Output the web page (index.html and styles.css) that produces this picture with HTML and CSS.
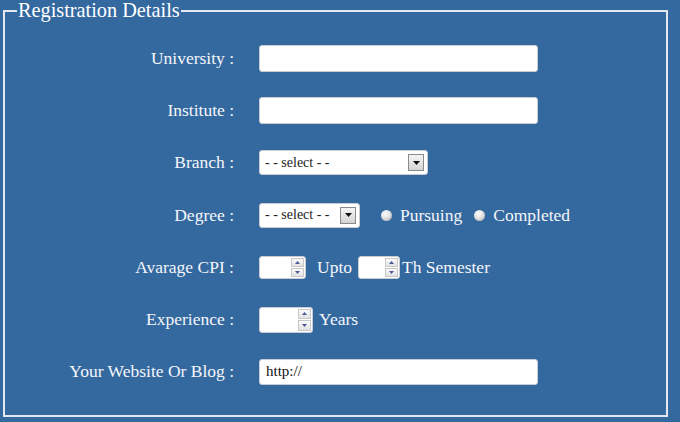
FILE: index.html
```
<!DOCTYPE html>
<html>
<head>
<meta charset="utf-8">
<link rel="stylesheet" href="styles.css">
</head>
<body>
<fieldset class="panel">
  <legend class="title">Registration Details</legend>
  <div class="form">
    <label class="lbl">University :</label>
    <div class="ctl"><input class="txt" type="text"></div>

    <label class="lbl">Institute :</label>
    <div class="ctl"><input class="txt" type="text"></div>

    <label class="lbl">Branch :</label>
    <div class="ctl">
      <div class="sel sel-wide"><span class="sel-text">- - select - -</span><span class="sel-btn"><svg width="7" height="4" viewBox="0 0 7 4"><path d="M0 0H7L3.5 4Z" fill="#111"/></svg></span></div>
    </div>

    <label class="lbl">Degree :</label>
    <div class="ctl">
      <div class="sel sel-narrow"><span class="sel-text">- - select - -</span><span class="sel-btn"><svg width="7" height="4" viewBox="0 0 7 4"><path d="M0 0H7L3.5 4Z" fill="#111"/></svg></span></div>
      <span class="radio radio-first"></span><span class="word">Pursuing</span>
      <span class="radio radio-second"></span><span class="word">Completed</span>
    </div>

    <label class="lbl">Avarage CPI :</label>
    <div class="ctl">
      <div class="num num-cpi"><span class="num-field"></span><span class="spin"><span class="spin-b"><svg width="5" height="3" viewBox="0 0 5 3"><path d="M0 3H5L2.5 0Z" fill="#4a5a9a"/></svg></span><span class="spin-b"><svg width="5" height="3" viewBox="0 0 5 3"><path d="M0 0H5L2.5 3Z" fill="#4a5a9a"/></svg></span></span></div>
      <span class="word word-upto">Upto</span>
      <div class="num num-sem"><span class="num-field"></span><span class="spin"><span class="spin-b"><svg width="5" height="3" viewBox="0 0 5 3"><path d="M0 3H5L2.5 0Z" fill="#4a5a9a"/></svg></span><span class="spin-b"><svg width="5" height="3" viewBox="0 0 5 3"><path d="M0 0H5L2.5 3Z" fill="#4a5a9a"/></svg></span></span></div>
      <span class="word word-th">Th Semester</span>
    </div>

    <label class="lbl">Experience :</label>
    <div class="ctl">
      <div class="num num-exp"><span class="num-field"></span><span class="spin"><span class="spin-b"><svg width="5" height="3" viewBox="0 0 5 3"><path d="M0 3H5L2.5 0Z" fill="#4a5a9a"/></svg></span><span class="spin-b"><svg width="5" height="3" viewBox="0 0 5 3"><path d="M0 0H5L2.5 3Z" fill="#4a5a9a"/></svg></span></span></div>
      <span class="word word-years">Years</span>
    </div>

    <label class="lbl">Your Website Or Blog :</label>
    <div class="ctl"><input class="txt txt-url" type="text" value="http://"></div>
  </div>
</fieldset>
</body>
</html>
```
FILE: styles.css
```
html, body {
  margin: 0;
  padding: 0;
  background: #34699f;
  width: 680px;
  height: 422px;
  overflow: hidden;
}
body {
  font-family: "Liberation Serif", "DejaVu Serif", serif;
  color: #ffffff;
}
.panel {
  margin: 0 0 0 3px;
  width: 661px;
  height: 413px;
  padding: 0;
  border: 2px solid #e4e8ee;
  box-sizing: content-box;
}
.title {
  font-size: 20.3px;
  padding: 0 1px;
  margin-left: 12px;
  line-height: 21px;
  color: #ffffff;
}
.form {
  display: grid;
  grid-template-columns: 229px 1fr;
  column-gap: 25px;
  grid-auto-rows: 52.3px;
  align-items: center;
  padding-top: 11px;
}
.lbl {
  text-align: right;
  font-size: 17.5px;
  color: #f4f6fa;
}
.ctl {
  display: flex;
  align-items: center;
  font-size: 17.5px;
}
.txt {
  width: 279px;
  height: 27px;
  box-sizing: border-box;
  border: 1px solid #c9ccd2;
  border-radius: 3px;
  background: #fff;
  margin: 0;
  padding: 0 6px;
  font-family: "Liberation Serif", serif;
  font-size: 15px;
  color: #111;
}
.sel {
  display: flex;
  align-items: center;
  justify-content: space-between;
  height: 25px;
  box-sizing: border-box;
  background: #fff;
  border: 1px solid #c9ccd2;
  border-radius: 3px;
  padding: 0 3px 0 5px;
}
.sel-wide { width: 169px; }
.sel-narrow { width: 101px; }
.sel-text {
  font-size: 14px;
  color: #222;
}
.sel-btn {
  width: 16px;
  height: 17px;
  box-sizing: border-box;
  border: 1px solid #8a8a8a;
  background: linear-gradient(#f4f4f4, #d4d4d4);
  display: flex;
  align-items: center;
  justify-content: center;
}
.radio {
  width: 11px;
  height: 11px;
  border-radius: 50%;
  background: radial-gradient(circle at 40% 35%, #ffffff 0%, #e6e6e6 40%, #a8a8a8 100%);
  margin: 0 8px 0 10px;
  flex: none;
}
.radio-first { margin-left: 21px; }
.radio-second { margin-left: 12px; }
.word { color: #f4f6fa; }
.num {
  display: flex;
  height: 23px;
  box-sizing: border-box;
  background: #fff;
  border: 1px solid #c9ccd2;
  border-radius: 3px;
  padding: 1px;
}
.num-field { flex: 1; }
.num-cpi { width: 47px; }
.num-sem { width: 42px; }
.num-exp { width: 54px; height: 26px; }
.spin {
  width: 13px;
  display: flex;
  flex-direction: column;
  gap: 1px;
}
.spin-b {
  flex: 1;
  border: 1px solid #c8c8c8;
  background: linear-gradient(#fafafa, #e2e2e2);
  display: flex;
  align-items: center;
  justify-content: center;
}
.word-upto { margin: 0 6px 0 11px; }
.word-th { margin-left: 2px; }
.word-years { margin-left: 6px; }
.txt-url { height: 26px; padding-left: 6px; }
```
